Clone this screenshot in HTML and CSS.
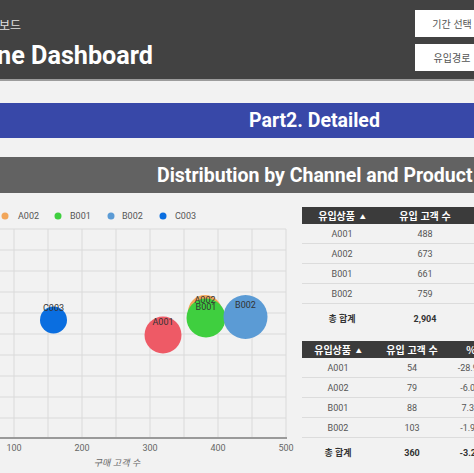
FILE: index.html
```html
<!DOCTYPE html>
<html lang="ko">
<head>
<meta charset="utf-8">
<title>Online Dashboard</title>
<link rel="stylesheet" href="styles.css">
</head>
<body>
<header class="header">
  <div class="brand">
    <div class="clip clip-sub"><span class="subtitle">온라인 대시보드</span></div>
    <div class="clip clip-title"><h1 class="title">Online Dashboard</h1></div>
  </div>
  <div class="actions">
    <button class="btn">기간 선택</button>
    <button class="btn">유입경로</button>
  </div>
</header>

<section class="band band-blue"><h2 class="band-text">Part2. Detailed</h2></section>
<section class="band band-grey"><h2 class="band-text">Distribution by Channel and Product</h2></section>

<main class="content">
  <div class="chart">
    <svg class="chart-svg" width="302" height="280" viewBox="0 0 302 280" xmlns="http://www.w3.org/2000/svg">
      <g class="legend" font-family="Roboto, 'Noto Sans CJK KR', sans-serif" font-size="9" fill="#555">
        <circle cx="-48" cy="23" r="3.5" fill="#ee5a66"/>
        <circle cx="5" cy="23" r="3.5" fill="#f2a65a"/>
        <text x="18" y="26">A002</text>
        <circle cx="58" cy="23" r="3.5" fill="#3fcf3f"/>
        <text x="70" y="26">B001</text>
        <circle cx="111" cy="23" r="3.5" fill="#5b9bd5"/>
        <text x="122" y="26">B002</text>
        <circle cx="163" cy="23" r="3.5" fill="#0a6ee0"/>
        <text x="175" y="26">C003</text>
      </g>
      <g stroke="#dadada" stroke-width="1">
        <line x1="14" y1="36" x2="14" y2="245"/>
        <line x1="48" y1="36" x2="48" y2="245"/>
        <line x1="82" y1="36" x2="82" y2="245"/>
        <line x1="116" y1="36" x2="116" y2="245"/>
        <line x1="150" y1="36" x2="150" y2="245"/>
        <line x1="184" y1="36" x2="184" y2="245"/>
        <line x1="218" y1="36" x2="218" y2="245"/>
        <line x1="252" y1="36" x2="252" y2="245"/>
        <line x1="286" y1="36" x2="286" y2="245"/>
        <line x1="0" y1="36" x2="286" y2="36"/>
        <line x1="0" y1="57" x2="286" y2="57"/>
        <line x1="0" y1="78" x2="286" y2="78"/>
        <line x1="0" y1="99" x2="286" y2="99"/>
        <line x1="0" y1="120" x2="286" y2="120"/>
        <line x1="0" y1="141" x2="286" y2="141"/>
        <line x1="0" y1="162" x2="286" y2="162"/>
        <line x1="0" y1="183" x2="286" y2="183"/>
        <line x1="0" y1="204" x2="286" y2="204"/>
        <line x1="0" y1="225" x2="286" y2="225"/>
      </g>
      <line x1="0" y1="245" x2="287" y2="245" stroke="#9a9a9a" stroke-width="2"/>
      <g font-family="Roboto, sans-serif" font-size="9" fill="#666" text-anchor="middle">
        <text x="14" y="258">100</text>
        <text x="82" y="258">200</text>
        <text x="150" y="258">300</text>
        <text x="218" y="258">400</text>
        <text x="286" y="258">500</text>
      </g>
      <text x="117" y="273" font-family="'Noto Sans CJK KR', sans-serif" font-size="9" font-style="italic" fill="#666" text-anchor="middle">구매 고객 수</text>
      <g>
        <circle cx="53.5" cy="127" r="13.5" fill="#0a6ee0"/>
        <circle cx="163" cy="142" r="18.5" fill="#ee5a66"/>
        <circle cx="205" cy="119" r="17" fill="#f2a65a"/>
        <circle cx="206" cy="125" r="19.5" fill="#3fcf3f"/>
        <circle cx="245.5" cy="124" r="22" fill="#5b9bd5"/>
      </g>
      <g font-family="Roboto, sans-serif" font-size="9" fill="#333" text-anchor="middle">
        <text x="53.5" y="118">C003</text>
        <text x="163" y="132">A001</text>
        <text x="205" y="110">A002</text>
        <text x="206" y="117">B001</text>
        <text x="245.5" y="115">B002</text>
      </g>
    </svg>
  </div>

  <div class="tables">
    <table class="tbl tbl-one">
      <colgroup><col class="c1a"><col class="c2a"><col class="c3a"></colgroup>
      <thead><tr><th>유입상품 <span class="sort">▲</span></th><th>유입 고객 수</th><th></th></tr></thead>
      <tbody>
        <tr><td>A001</td><td>488</td><td></td></tr>
        <tr><td>A002</td><td>673</td><td></td></tr>
        <tr><td>B001</td><td>661</td><td></td></tr>
        <tr><td>B002</td><td>759</td><td></td></tr>
        <tr class="total"><td>총 합계</td><td>2,904</td><td></td></tr>
      </tbody>
    </table>
    <table class="tbl tbl-two">
      <colgroup><col class="c1b"><col class="c2b"><col class="c3b"></colgroup>
      <thead><tr><th>유입상품 <span class="sort">▲</span></th><th>유입 고객 수</th><th>%</th></tr></thead>
      <tbody>
        <tr><td>A001</td><td>54</td><td>-28.9%</td></tr>
        <tr><td>A002</td><td>79</td><td>-6.0%</td></tr>
        <tr><td>B001</td><td>88</td><td>7.3%</td></tr>
        <tr><td>B002</td><td>103</td><td>-1.9%</td></tr>
        <tr class="total"><td>총 합계</td><td>360</td><td>-3.2%</td></tr>
      </tbody>
    </table>
  </div>
</main>
</body>
</html>
```

FILE: styles.css
```css
html, body {
  margin: 0;
  padding: 0;
}
body {
  width: 474px;
  height: 473px;
  overflow: hidden;
  background: #f2f2f2;
  font-family: Roboto, "Noto Sans CJK KR", sans-serif;
}
.header {
  height: 79px;
  background: #424242;
  border-bottom: 2px solid #9c9c9c;
  display: flex;
  justify-content: space-between;
}
.brand {
  display: flex;
  flex-direction: column;
}
.clip {
  display: flex;
  justify-content: flex-end;
  white-space: nowrap;
}
.clip-sub {
  width: 21px;
  margin-top: 17px;
  height: 16px;
}
.clip-title {
  width: 153px;
  margin-top: 9px;
}
.subtitle {
  font-family: "Noto Sans CJK KR", sans-serif;
  font-size: 12px;
  line-height: 16px;
  color: #e0e0e0;
}
.title {
  margin: 0;
  font-family: Roboto, sans-serif;
  font-weight: 700;
  font-size: 25.2px;
  line-height: 28px;
  color: #ffffff;
}
.actions {
  display: flex;
  flex-direction: column;
  gap: 7px;
  padding-top: 10px;
  width: 59px;
  overflow: visible;
}
.btn {
  width: 74px;
  height: 27px;
  flex: none;
  border: none;
  background: #ffffff;
  font-family: "Noto Sans CJK KR", sans-serif;
  font-size: 10px;
  color: #555;
  padding: 0;
}
.band {
  display: flex;
  align-items: center;
  color: #fff;
}
.band-blue {
  margin-top: 22px;
  height: 35px;
  background: #3848a8;
  padding-left: 249px;
}
.band-grey {
  margin-top: 19px;
  height: 36px;
  background: #626262;
  padding-left: 157px;
}
.band-text {
  margin: 0;
  font-family: Roboto, sans-serif;
  font-weight: 700;
  font-size: 19.5px;
  white-space: nowrap;
}
.content {
  display: flex;
}
.chart {
  width: 302px;
  flex: none;
}
.chart-svg {
  display: block;
  overflow: visible;
}
.tables {
  width: 190px;
  flex: none;
  padding-top: 14px;
  display: flex;
  flex-direction: column;
  gap: 8px;
}
.tbl {
  border-collapse: collapse;
  table-layout: fixed;
  width: 190px;
}
.c1a { width: 80px; }
.c2a { width: 86px; }
.c3a { width: 24px; }
.c1b { width: 72px; }
.c2b { width: 76px; }
.c3b { width: 42px; }
.tbl th {
  height: 17px;
  padding: 0;
  background: #3b3b3b;
  color: #fff;
  font-family: "Noto Sans CJK KR", sans-serif;
  font-weight: 700;
  font-size: 10px;
  white-space: nowrap;
  text-align: center;
}
.sort {
  font-size: 6px;
  vertical-align: 1px;
  margin-left: 2px;
}
.tbl td {
  height: 19px;
  padding: 0;
  border-bottom: 1px solid #dcdcdc;
  font-size: 9px;
  color: #555;
  text-align: center;
  white-space: nowrap;
}
.tbl .total td {
  height: 29px;
  border-bottom: none;
  font-weight: 700;
  color: #333;
}
```
